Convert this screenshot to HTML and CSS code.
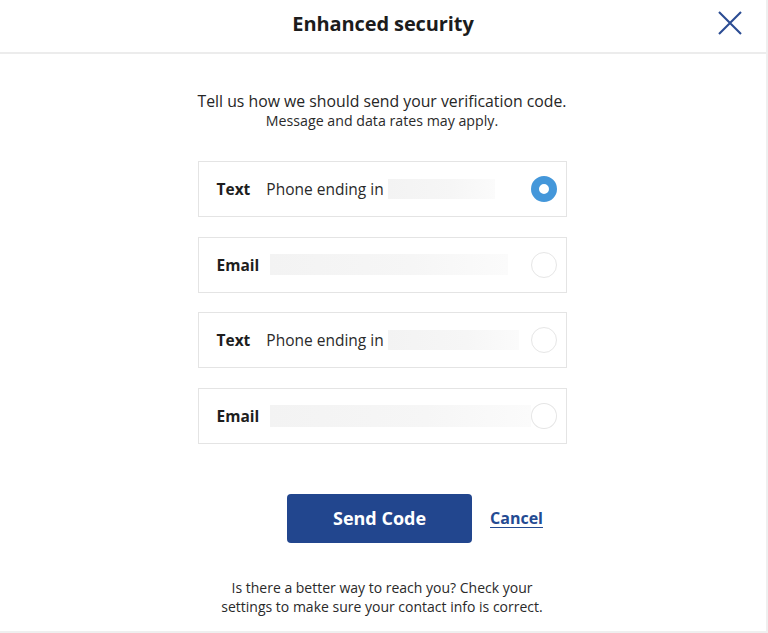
FILE: index.html
```html
<!DOCTYPE html>
<html lang="en">
<head>
<meta charset="utf-8">
<link rel="stylesheet" href="styles.css">
</head>
<body>
<div class="modal">
  <header class="head">
    <span></span>
    <h1 class="title">Enhanced security</h1>
    <button class="close" aria-label="Close">
      <svg width="24" height="24" viewBox="0 0 24 24"><path d="M1 1 L23 23 M23 1 L1 23" stroke="#2b4c93" stroke-width="2.1" fill="none"/></svg>
    </button>
  </header>
  <main class="content">
    <p class="intro">Tell us how we should send your verification code.</p>
    <p class="sub">Message and data rates may apply.</p>
    <div class="options">
      <label class="opt">
        <span class="kind kind-text">Text</span>
        <span class="desc">Phone ending in</span>
        <span class="mask mask-1"></span>
        <span class="radio on"></span>
      </label>
      <label class="opt">
        <span class="kind kind-email">Email</span>
        <span class="mask mask-2"></span>
        <span class="radio"></span>
      </label>
      <label class="opt">
        <span class="kind kind-text">Text</span>
        <span class="desc">Phone ending in</span>
        <span class="mask mask-3"></span>
        <span class="radio"></span>
      </label>
      <label class="opt">
        <span class="kind kind-email">Email</span>
        <span class="mask mask-4"></span>
        <span class="radio"></span>
      </label>
    </div>
    <div class="actions">
      <button class="send">Send Code</button>
      <a class="cancel" href="#">Cancel</a>
    </div>
    <p class="foot">Is there a better way to reach you? Check your<br>settings to make sure your contact info is correct.</p>
  </main>
</div>
</body>
</html>
```

FILE: styles.css
```css
* { box-sizing: border-box; }
html, body { margin: 0; padding: 0; background: #fff; }
body {
  font-family: "Open Sans", "Liberation Sans", sans-serif;
  color: #222;
}
.modal {
  width: 768px;
  height: 633px;
  border-right: 2px solid #efefef;
  border-bottom: 2px solid #efefef;
  overflow: hidden;
}
.head {
  height: 54px;
  border-bottom: 2px solid #ececec;
  display: grid;
  grid-template-columns: 1fr auto 1fr;
  align-items: center;
}
.title {
  margin: 0;
  font-size: 20px;
  font-weight: 700;
  color: #1c1c1c;
  letter-spacing: -0.1px;
  padding-bottom: 6px;
}
.close {
  justify-self: end;
  margin-right: 24px;
  margin-bottom: 6px;
  background: none;
  border: 0;
  padding: 0;
  width: 24px;
  height: 24px;
  display: flex;
}
.content {
  display: flex;
  flex-direction: column;
  align-items: center;
  padding-top: 36px;
  padding-right: 2px;
}
.intro {
  margin: 0;
  font-size: 15.8px;
  line-height: 22px;
  color: #262626;
}
.sub {
  margin: 0;
  font-size: 14.2px;
  line-height: 18px;
  color: #2a2a2a;
}
.options {
  margin-top: 31px;
  display: flex;
  flex-direction: column;
  gap: 19.5px;
  width: 369px;
}
.opt {
  height: 56px;
  border: 1px solid #e4e4e4;
  display: flex;
  align-items: center;
  padding: 0 9px 0 18px;
}
.kind {
  font-weight: 700;
  font-size: 15.5px;
  color: #1e1e1e;
}
.kind-text { margin-right: 16px; }
.kind-email { margin-right: 11px; }
.desc {
  font-size: 15.5px;
  color: #2a2a2a;
}
.mask {
  height: 20px;
  background: linear-gradient(90deg, #f3f3f3, #f6f6f6 60%, #fbfbfb);
}
.mask-1 { width: 107px; margin-left: 4px; }
.mask-2 { width: 238px; height: 21px; }
.mask-3 { width: 131px; margin-left: 4px; }
.mask-4 { width: 262px; height: 22px; }
.radio {
  margin-left: auto;
  width: 26px;
  height: 26px;
  border-radius: 50%;
  border: 1px solid #e6e6e6;
  background: #fff;
}
.radio.on {
  border: 8px solid #4497da;
  background: #fff;
}
.actions {
  margin-top: 50px;
  display: flex;
  align-items: center;
  gap: 18px;
  margin-left: 66px;
}
.send {
  width: 185px;
  height: 49px;
  background: #22468e;
  color: #fff;
  border: 0;
  border-radius: 4px;
  font-family: inherit;
  font-size: 18px;
  font-weight: 700;
}
.cancel {
  color: #234a92;
  font-weight: 700;
  font-size: 16px;
  text-decoration: underline;
  text-underline-offset: 3px;
}
.foot {
  margin: 35px 0 0;
  text-align: center;
  font-size: 14px;
  line-height: 19px;
  color: #2a2a2a;
}
```
